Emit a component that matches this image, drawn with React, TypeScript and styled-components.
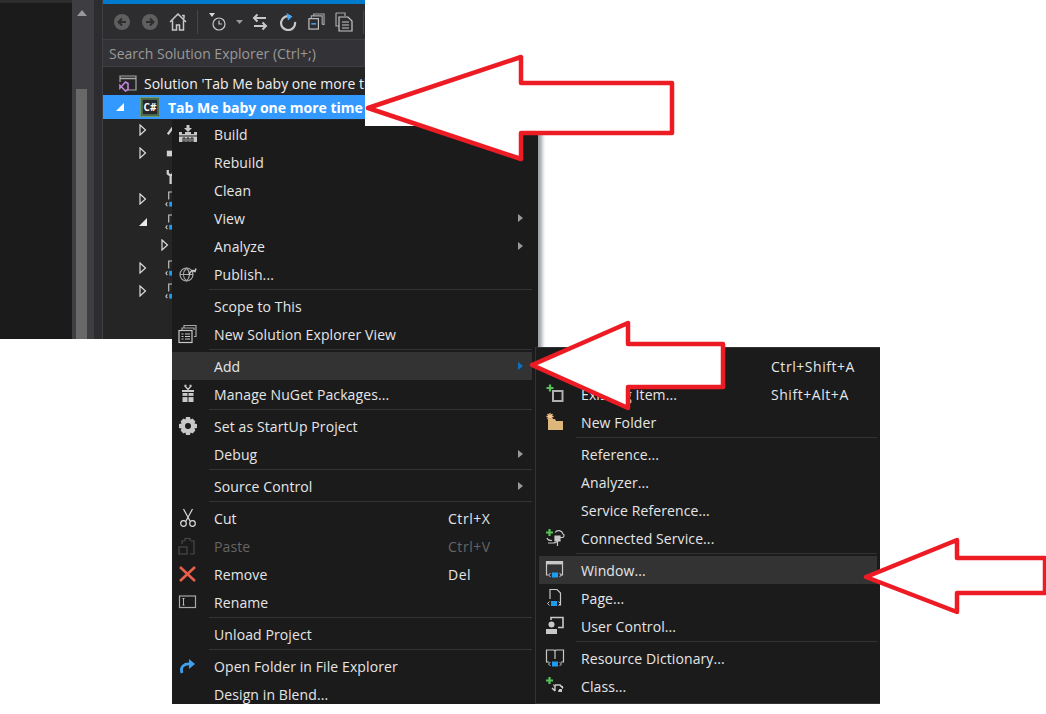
import React from "react";
import styled, { createGlobalStyle } from "styled-components";

const GlobalStyle = createGlobalStyle`
  html, body { margin: 0; padding: 0; background: #fff; }
  body { font-family: "Open Sans", "Noto Sans", "Liberation Sans", sans-serif; }
`;

const Page = styled.div`
  position: relative;
  width: 1046px;
  height: 714px;
  overflow: hidden;
  background: #fff;
`;

/* ---- IDE behind the menus ---- */
const IdePanel = styled.div`
  display: flex;
  width: 365px;
  height: 339px;
  overflow: hidden;
  background: #2d2d30;
`;

const EditorArea = styled.div`
  width: 72px;
  margin-top: 3px;
  background: #1b1b1c;
`;

const ScrollTrack = styled.div`
  display: flex;
  flex-direction: column;
  align-items: center;
  width: 22px;
  padding-right: 1px;
  box-sizing: border-box;
  background: #3e3e42;
`;

const ScrollUp = styled.div`
  margin-top: 10px;
  width: 0;
  height: 0;
  border-left: 5px solid transparent;
  border-right: 5px solid transparent;
  border-bottom: 6px solid #999;
  transform: translateX(-1px);
`;

const ScrollThumb = styled.div`
  flex: 1;
  width: 11px;
  margin-top: 73px;
  background: #686868;
  transform: translateX(-1px);
`;

const Gutter = styled.div`
  width: 8px;
  border-right: 1px solid #3f3f46;
`;

const Explorer = styled.div`
  flex: 1;
  display: flex;
  flex-direction: column;
  min-width: 0;
  background: #252526;
  border-top: 4px solid #007acc;
`;

const Toolbar = styled.div`
  display: flex;
  align-items: center;
  height: 35px;
  padding-left: 5px;
  background: #2d2d30;
`;

const ToolButton = styled.div<{ $w?: number }>`
  display: flex;
  flex: none;
  align-items: center;
  justify-content: center;
  width: ${(p) => p.$w ?? 28}px;
`;

const ToolSep = styled.div`
  flex: none;
  width: 1px;
  height: 24px;
  margin: 0 5px;
  background: #46464a;
`;

const SearchBox = styled.div`
  display: flex;
  align-items: center;
  height: 28px;
  padding-left: 6px;
  box-sizing: border-box;
  background: #333337;
  border: 1px solid #3f3f46;
  border-left: 0;
  font-size: 14px;
  color: #999;
  white-space: nowrap;
`;

const Tree = styled.div`
  padding-top: 5px;
`;

const TreeRow = styled.div<{ $indent: number; $selected?: boolean }>`
  display: flex;
  align-items: center;
  height: ${(p) => (p.$selected ? 24 : 23)}px;
  padding-left: ${(p) => p.$indent}px;
  background: ${(p) => (p.$selected ? "#3399ff" : "transparent")};
  color: ${(p) => (p.$selected ? "#fff" : "#f1f1f1")};
  font-size: 14px;
  font-weight: ${(p) => (p.$selected ? 700 : 400)};
  white-space: nowrap;
`;

const TreeLabel = styled.span<{ $gap: number }>`
  margin-left: ${(p) => p.$gap}px;
`;

const Expander = styled.svg<{ $gap: number }>`
  flex: none;
  width: 8px;
  height: 12px;
  margin-right: ${(p) => p.$gap}px;
  margin-bottom: 1px;
`;

const Glyph = styled.svg<{ $size?: number }>`
  flex: none;
  display: block;
  width: ${(p) => p.$size ?? 20}px;
  height: ${(p) => p.$size ?? 20}px;
  fill: none;
  stroke: #c8c8c8;
  stroke-width: 1.2;
`;

/* ---- context menus ---- */
const Menu = styled.div`
  position: absolute;
  left: 172px;
  top: 120px;
  width: 366px;
  height: 584px;
  overflow: hidden;
  box-sizing: border-box;
  padding-right: 6px;
  background: #1b1b1c;
  box-shadow: 4px 0 4px rgba(70, 80, 90, 0.55);
  clip-path: inset(0 -10px 0 0);
  font-size: 14px;
  letter-spacing: 0.1px;
`;

const SubMenu = styled.div`
  position: absolute;
  left: 535px;
  top: 347px;
  width: 345px;
  height: 357px;
  box-sizing: border-box;
  padding: 4px 3px 0;
  background: #1b1b1c;
  border-left: 1px solid #333337;
  border-top: 1px solid #333337;
  border-bottom: 1px solid #333337;
  font-size: 14px;
  letter-spacing: 0.1px;
`;

const Item = styled.div<{ $active?: boolean; $disabled?: boolean; $labelWidth: number }>`
  display: grid;
  grid-template-columns: 42px ${(p) => p.$labelWidth}px 1fr 14px;
  align-items: center;
  height: 28px;
  background: ${(p) => (p.$active ? "#333334" : "transparent")};
  color: ${(p) => (p.$disabled ? "#656565" : "#e6e6e6")};
  white-space: nowrap;
`;

const ItemIcon = styled.div`
  display: flex;
  padding-left: 6px;
`;

const Shortcut = styled.span`
  letter-spacing: 0.55px;
`;

const SubArrow = styled.div<{ $active?: boolean }>`
  width: 0;
  height: 0;
  border-top: 4.5px solid transparent;
  border-bottom: 4.5px solid transparent;
  border-left: 5px solid ${(p) => (p.$active ? "#0e70c0" : "#999")};
`;

const Separator = styled.div`
  height: 1px;
  margin: 1px 0 2px 37px;
  background: #333337;
`;

const Cover = styled.div`
  position: absolute;
  left: 365px;
  top: 0;
  width: 300px;
  height: 126px;
  background: #fff;
`;

const Callout = styled.svg<{ $x: number; $y: number; $w: number; $h: number }>`
  position: absolute;
  left: ${(p) => p.$x}px;
  top: ${(p) => p.$y}px;
  width: ${(p) => p.$w}px;
  height: ${(p) => p.$h}px;
  overflow: visible;
`;

const GREY = "#c8c8c8";
const BLUE = "#1e9cf0";
const GREEN = "#58c158";

const BlueBox = ({ x, y }: { x: number; y: number }) => (
  <>
    <rect x={x} y={y} width="6" height="5" fill={BLUE} stroke="none" />
    <path d={`M${x - 1.5} ${y + 0.5}l-2 2 2 2M${x + 7.5} ${y + 0.5}l2 2-2 2`} strokeWidth="1" />
  </>
);

const Plus = ({ x, y }: { x: number; y: number }) => (
  <path d={`M${x} ${y - 3.5}v7M${x - 3.5} ${y}h7`} stroke={GREEN} strokeWidth="2.2" />
);

const BuildIcon = () => (
  <Glyph viewBox="0 0 20 20">
    <path d="M1 8h3v2h3V8h6v2h3V8h3v10H1z" fill={GREY} stroke="none" />
    <path d="M8.5 1h3v3h2.5l-4 4-4-4h2.5z" fill={GREY} stroke="none" />
    <path d="M5 14h2v4H5zM9 14h2v4H9zM13 14h2v4h-2zM1 12h18" stroke="#1b1b1c" strokeWidth="1" />
  </Glyph>
);

const PublishIcon = () => (
  <Glyph viewBox="0 0 20 20" strokeWidth="1">
    <circle cx="8.5" cy="10.5" r="6.5" stroke="#a8a8a8" />
    <path d="M2 10.5h13M8.5 4c-4 4-4 9 0 13M8.5 4c4 4 4 9 0 13" stroke="#a8a8a8" />
    <path d="M11 11c1-4 4-5 6-4M18 4.5l-1 3-3-1" stroke={GREY} strokeWidth="1.5" />
  </Glyph>
);

const NewViewIcon = () => (
  <Glyph viewBox="0 0 20 20">
    <path d="M6 4V1.5h12v11h-2M4 6.5V4h12v2" stroke="#a8a8a8" />
    <rect x="1" y="6.5" width="13" height="12" fill="#1b1b1c" />
    <path d="M3.5 10h2M7 10h5M3.5 12.5h2M7 12.5h5M3.5 15h2M7 15h5" />
  </Glyph>
);

const GiftIcon = () => (
  <Glyph viewBox="0 0 20 20">
    <path d="M4 6h12v2H4zM4.500 9h5v9h-5zM10.500 9h5v9h-5z" fill={GREY} stroke="none" />
    <path d="M6.500 1.500l3.500 4 3.500-4M6.500 1.500h2M11.500 1.500h2" strokeWidth="1.4" />
    <path d="M4 12.500h12" stroke="#1b1b1c" />
  </Glyph>
);

const GearIcon = () => (
  <Glyph viewBox="0 0 20 20">
    <path
      d="M8 1h4l.6 2.600 2-1 2.800 2.800-1 2 2.600.6v4l-2.600.6 1 2-2.800 2.800-2-1L12 19H8l-.6-2.600-2 1-2.800-2.800 1-2L1 12V8l2.600-.6-1-2 2.800-2.800 2 1z"
      fill={GREY}
      stroke="none"
    />
    <circle cx="10" cy="10" r="3" fill="#1b1b1c" stroke="none" />
  </Glyph>
);

const CutIcon = () => (
  <Glyph viewBox="0 0 20 20" strokeWidth="1.500">
    <path d="M5.500 1l6.500 12M14.500 1L8 13" stroke="#dcdcdc" />
    <circle cx="5.500" cy="15.500" r="2.800" stroke="#dcdcdc" />
    <circle cx="14.500" cy="15.500" r="2.800" stroke="#dcdcdc" />
  </Glyph>
);

const PasteIcon = () => (
  <Glyph viewBox="0 0 20 20" stroke="#4a4a4a">
    <path d="M4 8V5h2.500M13 5h3v13h-4" stroke="#4a4a4a" />
    <path d="M7 5V2.500h5V5" stroke="#4a4a4a" />
    <rect x="1" y="11" width="8" height="7" stroke="#4a4a4a" />
  </Glyph>
);

const RemoveIcon = () => (
  <Glyph viewBox="0 0 20 20">
    <path d="M2 3l15 14M17 3L2 17" stroke="#e8604c" strokeWidth="2.600" />
  </Glyph>
);

const RenameIcon = () => (
  <Glyph viewBox="0 0 20 20">
    <rect x="1.500" y="4" width="16" height="11.500" stroke="#a8a8a8" />
    <path d="M4.500 6.500h2M4.500 13h2M5.500 6.500V13" stroke="#e0e0e0" strokeWidth="0.800" />
  </Glyph>
);

const OpenFolderIcon = () => (
  <Glyph viewBox="0 0 20 20">
    <path d="M4 17c-2-6 2-10 9-9" stroke="#3fa0f0" strokeWidth="2.800" />
    <path d="M11 3l6 5-6 5z" fill="#3fa0f0" stroke="none" />
  </Glyph>
);

const ExistingIcon = () => (
  <Glyph viewBox="0 0 20 20">
    <rect x="8" y="7" width="9.500" height="10" stroke="#b0b0b0" strokeWidth="2" />
    <Plus x={5} y={4} />
  </Glyph>
);

const FolderIcon = () => (
  <Glyph viewBox="0 0 20 20">
    <path d="M3 7h7l1 2h7v9H3z" fill="#dcb67a" stroke="none" />
    <path d="M5 1v7M1.500 4.500h7M2.500 2l5 5M7.500 2l-5 5" stroke="#f6c48d" strokeWidth="1.300" />
  </Glyph>
);

const ServiceIcon = () => (
  <Glyph viewBox="0 0 20 20">
    <Plus x={4.500} y={4.500} />
    <path d="M10 4.500a4.500 4.500 0 0 1 8 1.500c1.500.5 1.500 3-.5 3.500H15M2 10c.5 2 2 2.500 5 2.500M3 15h5c2 0 4-1 4-2" />
    <path d="M10 8v5h5V8zM12.500 13v5" fill={GREY} stroke={GREY} />
  </Glyph>
);

const WindowIcon = () => (
  <Glyph viewBox="0 0 20 20">
    <path d="M3 15H1.500V1.500h16V15H15" />
    <path d="M1.500 3h16" strokeWidth="2.800" />
    <BlueBox x={7} y={12.500} />
  </Glyph>
);

const PageIcon = () => (
  <Glyph viewBox="0 0 20 20">
    <path d="M5 11V1.500h7l3.500 3.500v12H14" />
    <BlueBox x={6} y={13} />
  </Glyph>
);

const UserIcon = () => (
  <Glyph viewBox="0 0 20 20">
    <path d="M6 4V1.500h12v10h-5" strokeWidth="1.600" />
    <circle cx="6.500" cy="8.500" r="3" fill={GREY} stroke="none" />
    <path d="M1 13h11v5H1z" fill={GREY} stroke="none" />
  </Glyph>
);

const DictionaryIcon = () => (
  <Glyph viewBox="0 0 20 20">
    <path d="M4 14H1.500V2h7.500l1 1 1-1h7.500v12H16M10 3v8" />
    <BlueBox x={7} y={13.500} />
  </Glyph>
);

const ClassIcon = () => (
  <Glyph viewBox="0 0 20 20">
    <Plus x={4.500} y={4.500} />
    <path d="M7 12l3 3M10 9h5l3 3M10 9v6M13 15h3" strokeWidth="1.500" />
    <path d="M8 8l2 1-1 2zM15 10h3v3zM14 13h3v3h-3z" fill={GREY} stroke="none" />
  </Glyph>
);

const TreeFileIcon = () => (
  <Glyph viewBox="0 0 14 18" $size={17} stroke="#bbb">
    <path d="M3 9V1h10v8" />
    <path d="M1.500 12l-1.500 2 1.500 2" />
    <rect x="3.500" y="11.500" width="6" height="5" fill={BLUE} stroke="none" />
  </Glyph>
);

const TreeWrenchIcon = () => (
  <Glyph viewBox="0 0 14 18" $size={17}>
    <path d="M2 2v4l3 2 3-2V2M5 8v9" stroke="#d0d0d0" strokeWidth="2.400" />
  </Glyph>
);

const TreeSquareIcon = () => (
  <Glyph viewBox="0 0 14 18" $size={17}>
    <rect x="1" y="6" width="5.500" height="6" fill="#d0d0d0" stroke="none" />
  </Glyph>
);

const TreeBrushIcon = () => (
  <Glyph viewBox="0 0 14 18" $size={17}>
    <path d="M2 13L8 5" stroke="#d0d0d0" strokeWidth="2.400" />
  </Glyph>
);

const SolutionIcon = () => (
  <Glyph viewBox="0 0 18 18" $size={18}>
    <path d="M1 7V1h16v14H9" stroke="#a8a8a8" />
    <path d="M1 3.500h16" stroke="#a8a8a8" strokeWidth="1.500" />
    <path d="M1 10.500l5.500 5.500 2.500-1.500V8.500L6.500 7 1 13z" stroke="#c586e0" strokeWidth="1.600" />
  </Glyph>
);

const CSharpIcon = () => (
  <Glyph viewBox="0 0 20 20" $size={20}>
    <rect x="0.500" y="0.500" width="19" height="19" fill="#33363a" stroke="#6f9a6f" />
    <rect x="2" y="2" width="16" height="16" fill="#26282b" stroke="#5b8a5b" />
    <text x="10" y="13.500" textAnchor="middle" fontSize="10" fontWeight="700" fill="#fff" stroke="none">
      C#
    </text>
  </Glyph>
);

const Collapsed = ({ gap }: { gap: number }) => (
  <Expander viewBox="0 0 8 12" $gap={gap}>
    <path d="M1 1l5.500 5L1 11z" fill="none" stroke="#dcdcdc" strokeWidth="1.200" />
  </Expander>
);

const Opened = ({ gap, color }: { gap: number; color: string }) => (
  <Expander viewBox="0 0 8 12" $gap={gap}>
    <path d="M8 2v8H0z" fill={color} />
  </Expander>
);

const Arrow = ({ x, y, w, h, points }: { x: number; y: number; w: number; h: number; points: string }) => (
  <Callout $x={x} $y={y} $w={w} $h={h} viewBox={`0 0 ${w} ${h}`}>
    <polygon points={points} fill="#fff" stroke="#ed1c24" strokeWidth="4.500" strokeLinejoin="round" />
  </Callout>
);

type Entry =
  | "sep"
  | { label: string; icon?: React.ReactNode; shortcut?: string; sub?: boolean; active?: boolean; disabled?: boolean };

const mainEntries: Entry[] = [
  { label: "Build", icon: <BuildIcon /> },
  { label: "Rebuild" },
  { label: "Clean" },
  { label: "View", sub: true },
  { label: "Analyze", sub: true },
  { label: "Publish...", icon: <PublishIcon /> },
  "sep",
  { label: "Scope to This" },
  { label: "New Solution Explorer View", icon: <NewViewIcon /> },
  "sep",
  { label: "Add", sub: true, active: true },
  { label: "Manage NuGet Packages...", icon: <GiftIcon /> },
  "sep",
  { label: "Set as StartUp Project", icon: <GearIcon /> },
  { label: "Debug", sub: true },
  "sep",
  { label: "Source Control", sub: true },
  "sep",
  { label: "Cut", icon: <CutIcon />, shortcut: "Ctrl+X" },
  { label: "Paste", icon: <PasteIcon />, shortcut: "Ctrl+V", disabled: true },
  { label: "Remove", icon: <RemoveIcon />, shortcut: "Del" },
  { label: "Rename", icon: <RenameIcon /> },
  "sep",
  { label: "Unload Project" },
  "sep",
  { label: "Open Folder in File Explorer", icon: <OpenFolderIcon /> },
  { label: "Design in Blend..." },
];

const addEntries: Entry[] = [
  { label: "New Item...", shortcut: "Ctrl+Shift+A" },
  { label: "Existing Item...", icon: <ExistingIcon />, shortcut: "Shift+Alt+A" },
  { label: "New Folder", icon: <FolderIcon /> },
  "sep",
  { label: "Reference..." },
  { label: "Analyzer..." },
  { label: "Service Reference..." },
  { label: "Connected Service...", icon: <ServiceIcon /> },
  "sep",
  { label: "Window...", icon: <WindowIcon />, active: true },
  { label: "Page...", icon: <PageIcon /> },
  { label: "User Control...", icon: <UserIcon /> },
  "sep",
  { label: "Resource Dictionary...", icon: <DictionaryIcon /> },
  { label: "Class...", icon: <ClassIcon /> },
];

const renderEntries = (entries: Entry[], labelWidth: number) =>
  entries.map((e, i) =>
    e === "sep" ? (
      <Separator key={i} />
    ) : (
      <Item key={i} $active={e.active} $disabled={e.disabled} $labelWidth={labelWidth}>
        <ItemIcon>{e.icon}</ItemIcon>
        <span>{e.label}</span>
        <Shortcut>{e.shortcut}</Shortcut>
        {e.sub && <SubArrow $active={e.active} />}
      </Item>
    )
  );

export default function App() {
  return (
    <Page>
      <GlobalStyle />
      <IdePanel>
        <EditorArea />
        <ScrollTrack>
          <ScrollUp />
          <ScrollThumb />
        </ScrollTrack>
        <Gutter />
        <Explorer>
          <Toolbar>
            <ToolButton>
              <Glyph viewBox="0 0 16 16" $size={16}>
                <circle cx="8" cy="8" r="8" fill="#5f5f5f" stroke="none" />
                <path d="M12 8H5M8 4.500L4.500 8 8 11.500" stroke="#2d2d30" strokeWidth="2" />
              </Glyph>
            </ToolButton>
            <ToolButton>
              <Glyph viewBox="0 0 16 16" $size={16}>
                <circle cx="8" cy="8" r="8" fill="#5f5f5f" stroke="none" />
                <path d="M4 8h7M8 4.500L11.500 8 8 11.500" stroke="#2d2d30" strokeWidth="2" />
              </Glyph>
            </ToolButton>
            <ToolButton>
              <Glyph viewBox="0 0 18 18" $size={18} stroke="#d8d8d8">
                <path d="M1 9l8-8 8 8M3.500 7.500V17h4v-5h3v5h4V7.500M13 2.500h2v3" strokeWidth="1.500" />
              </Glyph>
            </ToolButton>
            <ToolSep />
            <ToolButton $w={30}>
              <Glyph viewBox="0 0 20 20" $size={20}>
                <path d="M1 1h6L4 5z" fill="#d8d8d8" stroke="none" />
                <circle cx="11" cy="12" r="6" />
                <path d="M11 8.500V12h3" />
              </Glyph>
            </ToolButton>
            <ToolButton $w={13}>
              <Glyph viewBox="0 0 8 8" $size={8}>
                <path d="M0 2h7L3.500 6z" fill="#999" stroke="none" />
              </Glyph>
            </ToolButton>
            <ToolButton>
              <Glyph viewBox="0 0 18 18" $size={18} stroke="#d8d8d8">
                <path d="M15 5H3M6.500 1.500L3 5l3.500 3.500M3 13h12M11.500 9.500L15 13l-3.500 3.500" strokeWidth="2" />
              </Glyph>
            </ToolButton>
            <ToolButton>
              <Glyph viewBox="0 0 18 18" $size={18} stroke="#4aa5f0">
                <path d="M11.500 3.500A7 7 0 1 0 16 9" strokeWidth="2.200" />
                <path d="M7.500 0l6 3.500-4.500 4z" fill="#4aa5f0" stroke="none" />
              </Glyph>
            </ToolButton>
            <ToolButton>
              <Glyph viewBox="0 0 18 18" $size={17}>
                <path d="M6 3V1h11v11h-2M3.500 5.500V3H15v9" stroke="#a8a8a8" />
                <rect x="1" y="6" width="10" height="11" fill="#2d2d30" />
                <path d="M3.500 11.500h5" stroke="#4aa5f0" strokeWidth="1.600" />
              </Glyph>
            </ToolButton>
            <ToolButton>
              <Glyph viewBox="0 0 18 20" $size={20}>
                <path d="M1 1h9v3M1 1v13h3" stroke="#a8a8a8" />
                <path d="M4 5h9l4 4v10H4z" fill="#2d2d30" />
                <path d="M7 10h7M7 13h7M7 16h7" strokeWidth="1" />
              </Glyph>
            </ToolButton>
            <ToolSep />
          </Toolbar>
          <SearchBox>Search Solution Explorer (Ctrl+;)</SearchBox>
          <Tree>
            <TreeRow $indent={16}>
              <SolutionIcon />
              <TreeLabel $gap={7}>Solution 'Tab Me baby one more time'</TreeLabel>
            </TreeRow>
            <TreeRow $indent={13} $selected>
              <Opened gap={16} color="#fff" />
              <CSharpIcon />
              <TreeLabel $gap={8}>Tab Me baby one more time</TreeLabel>
            </TreeRow>
            <TreeRow $indent={36}><Collapsed gap={17} /><TreeBrushIcon /></TreeRow>
            <TreeRow $indent={36}><Collapsed gap={17} /><TreeSquareIcon /></TreeRow>
            <TreeRow $indent={61}><TreeWrenchIcon /></TreeRow>
            <TreeRow $indent={36}><Collapsed gap={17} /><TreeFileIcon /></TreeRow>
            <TreeRow $indent={36}><Opened gap={17} color="#e8e8e8" /><TreeFileIcon /></TreeRow>
            <TreeRow $indent={58}><Collapsed gap={0} /></TreeRow>
            <TreeRow $indent={36}><Collapsed gap={17} /><TreeFileIcon /></TreeRow>
            <TreeRow $indent={36}><Collapsed gap={17} /><TreeFileIcon /></TreeRow>
          </Tree>
        </Explorer>
      </IdePanel>

      <Menu>{renderEntries(mainEntries, 234)}</Menu>
      <SubMenu>{renderEntries(addEntries, 190)}</SubMenu>
      <Cover />

      <Arrow x={360} y={50} w={320} h={115} points="8,58 161,7 161,33 312,33 312,83 161,83 161,109" />
      <Arrow x={525} y={316} w={205} h={100} points="7,49 103,7 103,28 198,28 198,71 103,71 103,92" />
      <Arrow x={860} y={534} w={186} h={84} points="6,43 97,6 97,24 185,24 185,59 97,59 97,78" />
    </Page>
  );
}
